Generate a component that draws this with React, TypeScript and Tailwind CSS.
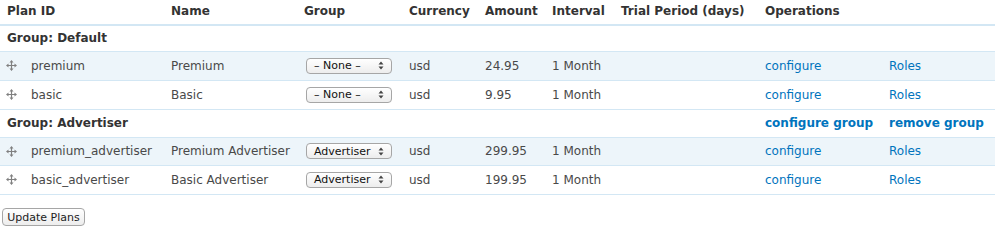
import React from 'react';

type Plan = {
  id: string;
  name: string;
  group: string;
  amount: string;
  alt: boolean;
  h: string;
};

const groups: { title: string; ops: boolean; h: string; plans: Plan[] }[] = [
  {
    title: 'Default',
    ops: false,
    h: 'h-[26px]',
    plans: [
      { id: 'premium', name: 'Premium', group: '– None –', amount: '24.95', alt: true, h: 'h-[29px]' },
      { id: 'basic', name: 'Basic', group: '– None –', amount: '9.95', alt: false, h: 'h-[29px]' },
    ],
  },
  {
    title: 'Advertiser',
    ops: true,
    h: 'h-[28px]',
    plans: [
      { id: 'premium_advertiser', name: 'Premium Advertiser', group: 'Advertiser', amount: '299.95', alt: true, h: 'h-[28px]' },
      { id: 'basic_advertiser', name: 'Basic Advertiser', group: 'Advertiser', amount: '199.95', alt: false, h: 'h-[29px]' },
    ],
  },
];

function DragHandle() {
  return (
    <svg width="11" height="11" viewBox="0 0 11 11" className="shrink-0 text-[#808080]">
      <path d="M5.5 0 L3.5 2.5 H4.9 V4.9 H2.5 V3.5 L0 5.5 L2.5 7.5 V6.1 H4.9 V8.5 H3.5 L5.5 11 L7.5 8.5 H6.1 V6.1 H8.5 V7.5 L11 5.5 L8.5 3.5 V4.9 H6.1 V2.5 H7.5 Z" fill="currentColor" />
    </svg>
  );
}

function FakeSelect({ label }: { label: string }) {
  return (
    <div className="flex items-center justify-between w-[86px] h-[16px] rounded-[4px] border border-[#a6a6a6] bg-gradient-to-b from-white to-[#ededed] pl-[7px] pr-[7px] text-[11px] leading-none text-[#111]">
      <span>{label}</span>
      <svg width="6" height="9" viewBox="0 0 6 9" className="text-[#444]">
        <path d="M3 0.5 L5.5 3.5 H0.5 Z M3 8.5 L5.5 5.5 H0.5 Z" fill="currentColor" />
      </svg>
    </div>
  );
}

export default function App() {
  const cell = 'px-[7px] align-middle';
  return (
    <div className="bg-white w-[999px] h-[232px] text-[12px] text-[#494949] font-['DejaVu_Sans',sans-serif]">
      <table className="table-fixed w-[995px] border-collapse">
        <colgroup>
          <col className="w-[164px]" />
          <col className="w-[133px]" />
          <col className="w-[105px]" />
          <col className="w-[76px]" />
          <col className="w-[67px]" />
          <col className="w-[69px]" />
          <col className="w-[144px]" />
          <col className="w-[124px]" />
          <col className="w-[113px]" />
        </colgroup>
        <thead>
          <tr className="h-[25px] border-b-2 border-[#d3e7f4] text-left font-bold text-[#333]">
            <th className={cell + ' pb-[2px]'}>Plan ID</th>
            <th className={cell + ' pb-[2px]'}>Name</th>
            <th className={cell + ' pb-[2px]'}>Group</th>
            <th className={cell + ' pb-[2px]'}>Currency</th>
            <th className={cell + ' pb-[2px]'}>Amount</th>
            <th className={cell + ' pb-[2px]'}>Interval</th>
            <th className={cell + ' pb-[2px] whitespace-nowrap'}>Trial Period (days)</th>
            <th className={cell + ' pb-[2px]'} colSpan={2}>Operations</th>
          </tr>
        </thead>
        <tbody>
          {groups.map((g) => (
            <React.Fragment key={g.title}>
              <tr className={g.h + ' border-b border-[#d3e7f4] font-bold text-[#333]'}>
                <td className={cell} colSpan={7}>Group: {g.title}</td>
                <td className={cell + ' text-[#0074bd] whitespace-nowrap'}>{g.ops ? 'configure group' : ''}</td>
                <td className={cell + ' text-[#0074bd] whitespace-nowrap'}>{g.ops ? 'remove group' : ''}</td>
              </tr>
              {g.plans.map((p) => (
                <tr key={p.id} className={p.h + ' border-b border-[#d3e7f4] ' + (p.alt ? 'bg-[#edf5fa]' : 'bg-white')}>
                  <td className="pl-[6px] pr-[7px] align-middle">
                    <div className="flex items-center gap-[14px]">
                      <DragHandle />
                      <span>{p.id}</span>
                    </div>
                  </td>
                  <td className={cell + ' whitespace-nowrap'}>{p.name}</td>
                  <td className="pl-[9px] align-middle">
                    <FakeSelect label={p.group} />
                  </td>
                  <td className={cell}>usd</td>
                  <td className={cell}>{p.amount}</td>
                  <td className={cell}>1 Month</td>
                  <td className={cell}></td>
                  <td className={cell + ' text-[#0074bd]'}>configure</td>
                  <td className={cell + ' text-[#0074bd]'}>Roles</td>
                </tr>
              ))}
            </React.Fragment>
          ))}
        </tbody>
      </table>
      <div className="pt-[13px] pl-[2px]">
        <button className="w-[83px] h-[18px] rounded-[4px] border border-[#a6a6a6] bg-gradient-to-b from-white to-[#ededed] text-[11px] text-[#222] leading-none">
          Update Plans
        </button>
      </div>
    </div>
  );
}
